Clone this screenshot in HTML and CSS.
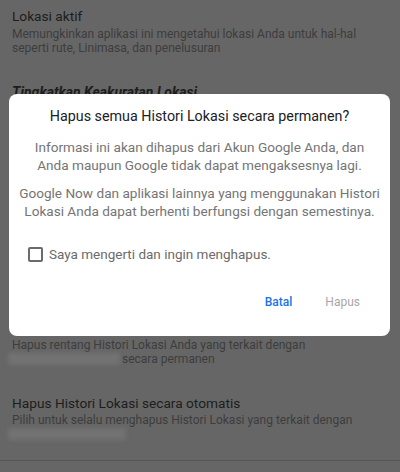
FILE: index.html
```html
<!DOCTYPE html>
<html lang="id">
<head>
    <meta charset="UTF-8">
    <meta name="viewport" content="width=device-width, initial-scale=1.0">
    <title>Histori Lokasi</title>
    <link rel="stylesheet" href="styles.css">
</head>
<body>
    <div class="settings">
        <div class="item first">
            <div class="item-title">Lokasi aktif</div>
            <div class="item-sub">Memungkinkan aplikasi ini mengetahui lokasi Anda untuk hal-hal<br>seperti rute, Linimasa, dan penelusuran</div>
        </div>
        <div class="section-title">Tingkatkan Keakuratan Lokasi</div>
        <div class="spacer"></div>
        <div class="item">
            <div class="item-sub">Hapus rentang Histori Lokasi Anda yang terkait dengan<br><span class="blur wide"></span>secara permanen</div>
        </div>
        <div class="item auto">
            <div class="item-title">Hapus Histori Lokasi secara otomatis</div>
            <div class="item-sub">Pilih untuk selalu menghapus Histori Lokasi yang terkait dengan<br><span class="blur wider"></span></div>
        </div>
        <div class="divider"></div>
    </div>

    <div class="dialog">
        <h2>Hapus semua Histori Lokasi secara permanen?</h2>
        <p>Informasi ini akan dihapus dari Akun Google Anda, dan<br>Anda maupun Google tidak dapat mengaksesnya lagi.</p>
        <p>Google Now dan aplikasi lainnya yang menggunakan Histori<br>Lokasi Anda dapat berhenti berfungsi dengan semestinya.</p>
        <label class="check">
            <span class="box"></span>
            Saya mengerti dan ingin menghapus.
        </label>
        <div class="actions">
            <button class="btn primary">Batal</button>
            <button class="btn disabled">Hapus</button>
        </div>
    </div>
</body>
</html>
```

FILE: styles.css
```css
body {
    margin: 0;
    font-family: Roboto, "Noto Sans", sans-serif;
    background: #666;
    width: 400px;
    height: 472px;
    overflow: hidden;
    position: relative;
}
.settings {
    padding: 0 12px;
}
.item-title {
    font-size: 13.7px;
    line-height: 20px;
    color: #1d1d1d;
}
.item-sub {
    font-size: 12px;
    line-height: 14px;
    color: #3d3d3d;
    white-space: nowrap;
}
.item.first {
    padding-top: 6px;
}
.item.first .item-sub {
    margin-top: 1px;
}
.section-title {
    margin-top: 27px;
    font-size: 14px;
    line-height: 20px;
    font-weight: bold;
    font-style: italic;
    color: #1d1d1d;
}
.spacer {
    height: 236px;
}
.item.auto {
    margin-top: 27px;
}
.blur {
    display: inline-block;
    height: 12px;
    vertical-align: -2px;
    background: #727272;
    filter: blur(2px);
}
.blur.wide {
    width: 112px;
    margin-left: -4px;
    margin-right: 2px;
}
.blur.wider {
    width: 118px;
    margin-left: -4px;
}
.divider {
    margin: 19px -12px 0;
    height: 1px;
    background: #575757;
}
.dialog {
    position: absolute;
    top: 94px;
    left: 9px;
    width: 381px;
    height: 242px;
    box-sizing: border-box;
    background: #fff;
    border-radius: 8px;
    padding: 12px 6px 0;
}
.dialog h2 {
    margin: 0;
    font-size: 14.3px;
    line-height: 20px;
    font-weight: 400;
    color: #202124;
    text-align: center;
}
.dialog p {
    margin: 12px 0 0;
    font-size: 13.6px;
    line-height: 18px;
    color: #757575;
    text-align: center;
    white-space: nowrap;
}
.dialog p + p {
    margin-top: 10px;
}
.check {
    display: flex;
    align-items: center;
    gap: 6px;
    margin-top: 26px;
    padding-left: 13px;
    font-size: 13.5px;
    color: #6b6b6b;
}
.box {
    width: 11px;
    height: 11px;
    border: 2px solid #6b6b6b;
    border-radius: 2px;
}
.actions {
    display: flex;
    justify-content: flex-end;
    gap: 33px;
    margin-top: 33px;
    padding-right: 24px;
}
.btn {
    border: none;
    background: none;
    padding: 0;
    font-family: inherit;
    font-size: 12px;
    font-weight: 500;
}
.btn.primary {
    color: #1a73e8;
}
.btn.disabled {
    color: #a8a8a8;
    font-weight: 400;
}
```
